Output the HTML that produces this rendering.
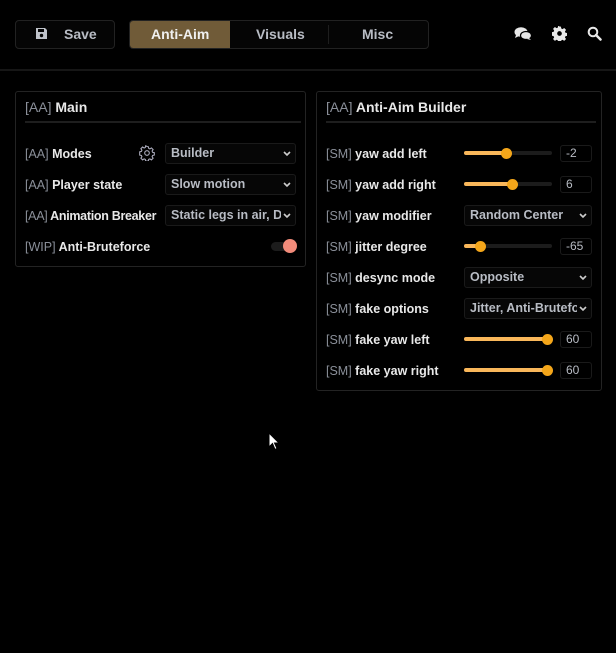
<!DOCTYPE html>
<html><head><style>
*{box-sizing:border-box;margin:0;padding:0}
body{width:616px;height:653px;background:#000;font-family:"Liberation Sans",sans-serif;font-size:12.5px;color:#e8e8e8;position:relative;overflow:hidden;font-weight:bold}
.a{position:absolute}
.btn{border:1px solid #222;border-radius:4px;background:#050505}
.lbl{position:absolute;white-space:nowrap;line-height:16px}
.g{color:#8a8f99;font-weight:normal}
.sel{position:absolute;height:21px;border:1px solid #1a1a1a;border-radius:3px;background:#060606;color:#b8bcc4;font-weight:bold;padding-left:5px;line-height:19px}
.sel span{display:block;overflow:hidden;white-space:nowrap;margin-right:14px}
.sel svg{position:absolute;right:4px;top:7px}
.tr{position:absolute;height:4px;background:#1c1c1c;border-radius:2px}
.fill{position:absolute;left:0;top:0;height:4px;background:#f9b75a;border-radius:2px}
.th{position:absolute;width:11px;height:11px;border-radius:50%;background:#f4a61a;top:-3.5px}
.num{position:absolute;width:32px;height:17px;border:1px solid #1a1a1a;border-radius:3px;color:#b8bcc4;font-size:12px;font-weight:normal;padding-left:5px;line-height:15px}
.panel{position:absolute;border:1px solid #232323;border-radius:3px}
</style></head><body>
<div class="a btn" style="left:15px;top:20px;width:100px;height:29px"></div>
<svg class="a" style="left:35px;top:27px" width="13" height="13" viewBox="0 0 13 13"><path d="M1 1h9l2 2v9H1z" fill="#bfc3ca"/><rect x="3" y="2" width="6" height="3" fill="#050505"/><circle cx="6.5" cy="8.5" r="1.7" fill="#050505"/></svg>
<div class="lbl" style="left:64px;top:26px;color:#b8bcc4;font-size:14px">Save</div>
<div class="a btn" style="left:129px;top:20px;width:300px;height:29px"></div>
<div class="a" style="left:130px;top:21px;width:100px;height:27px;background:#705b38;border-radius:3px 0 0 3px"></div>
<div class="a" style="left:328px;top:25px;width:1px;height:19px;background:#1e1e1e"></div>
<div class="lbl" style="left:151px;top:26px;font-size:14px;color:#f0f0f0">Anti-Aim</div>
<div class="lbl" style="left:256px;top:26px;font-size:14px;color:#b8bcc4">Visuals</div>
<div class="lbl" style="left:362px;top:26px;font-size:14px;color:#b8bcc4">Misc</div>
<svg class="a" style="left:514px;top:26px" width="18" height="15" viewBox="0 0 18 15"><ellipse cx="7" cy="6" rx="6.5" ry="4.8" fill="#e8e8e8"/><path d="M2 9l-1 3 4-2z" fill="#e8e8e8"/><ellipse cx="12" cy="9.5" rx="5.5" ry="4" fill="#e8e8e8" stroke="#000" stroke-width="1.2"/><path d="M15 12l2 2-4-1z" fill="#e8e8e8"/></svg>
<svg class="a" style="left:552px;top:26px" width="15" height="15" viewBox="0 0 16 16"><path d="M8 0.5l1.5.2.4 2 1.4.6 1.7-1.2 2 2-1.2 1.7.6 1.4 2 .4v2.8l-2 .4-.6 1.4 1.2 1.7-2 2-1.7-1.2-1.4.6-.4 2H6.6l-.4-2-1.4-.6-1.7 1.2-2-2 1.2-1.7-.6-1.4-2-.4V6.6l2-.4.6-1.4-1.2-1.7 2-2 1.7 1.2 1.4-.6.4-2z" fill="#e8e8e8"/><circle cx="8" cy="8" r="2.5" fill="#000"/></svg>
<svg class="a" style="left:587px;top:26px" width="15" height="15" viewBox="0 0 15 15"><circle cx="6" cy="6" r="4.3" fill="none" stroke="#e8e8e8" stroke-width="2"/><path d="M9 9l4.5 4.5" stroke="#e8e8e8" stroke-width="2.5" stroke-linecap="round"/></svg>
<div class="a" style="left:0;top:69px;width:616px;height:2px;background:#161616"></div>

<div class="panel" style="left:15px;top:91px;width:291px;height:176px"></div>
<div class="lbl" style="left:25px;top:99px;font-size:14px"><span class="g">[AA]</span> Main</div>
<div class="a" style="left:25px;top:121px;width:276px;height:2px;background:#1e1e1e"></div>
<div class="lbl" style="left:25px;top:146px"><span class="g">[AA]</span> Modes</div>
<svg class="a" style="left:139px;top:145px" width="16" height="16" viewBox="0 0 16 16"><path d="M8 1.5l1.3.2.4 1.7 1.2.5 1.5-1 1.7 1.7-1 1.5.5 1.2 1.7.4v2.4l-1.7.4-.5 1.2 1 1.5-1.7 1.7-1.5-1-1.2.5-.4 1.7H6.7l-.4-1.7-1.2-.5-1.5 1-1.7-1.7 1-1.5-.5-1.2-1.7-.4V6.8l1.7-.4.5-1.2-1-1.5 1.7-1.7 1.5 1 1.2-.5.4-1.7z" fill="none" stroke="#aab" stroke-width="1.1"/><circle cx="8" cy="8" r="2.3" fill="none" stroke="#aab" stroke-width="1.1"/></svg>
<div class="sel" style="left:165px;top:143px;width:131px"><span>Builder</span><svg width="8" height="6" viewBox="0 0 8 6"><path d="M1 1l3 3 3-3" fill="none" stroke="#ccc" stroke-width="1.6"/></svg></div>
<div class="lbl" style="left:25px;top:177px"><span class="g">[AA]</span> Player state</div>
<div class="sel" style="left:165px;top:174px;width:131px"><span>Slow motion</span><svg width="8" height="6" viewBox="0 0 8 6"><path d="M1 1l3 3 3-3" fill="none" stroke="#ccc" stroke-width="1.6"/></svg></div>
<div class="lbl" style="left:25px;top:208px;letter-spacing:-0.3px"><span class="g">[AA]</span> Animation Breaker</div>
<div class="sel" style="left:165px;top:205px;width:131px"><span>Static legs in air, Dis</span><svg width="8" height="6" viewBox="0 0 8 6"><path d="M1 1l3 3 3-3" fill="none" stroke="#ccc" stroke-width="1.6"/></svg></div>
<div class="lbl" style="left:25px;top:239px"><span class="g">[WIP]</span> Anti-Bruteforce</div>
<div class="a" style="left:271px;top:242px;width:22px;height:9px;border-radius:5px;background:#1c1c1c"></div>
<div class="a" style="left:283px;top:239px;width:14px;height:14px;border-radius:50%;background:#f28b7a"></div>

<div class="panel" style="left:316px;top:91px;width:286px;height:300px"></div>
<div class="lbl" style="left:326px;top:99px;font-size:14px"><span class="g">[AA]</span> Anti-Aim Builder</div>
<div class="a" style="left:326px;top:121px;width:270px;height:2px;background:#1e1e1e"></div>

<div class="lbl" style="left:326px;top:146px"><span class="g">[SM]</span> yaw add left</div>
<div class="tr" style="left:464px;top:151px;width:88px"><div class="fill" style="width:42px"></div><div class="th" style="left:37px"></div></div>
<div class="num" style="left:560px;top:145px">-2</div>
<div class="lbl" style="left:326px;top:177px"><span class="g">[SM]</span> yaw add right</div>
<div class="tr" style="left:464px;top:182px;width:88px"><div class="fill" style="width:48px"></div><div class="th" style="left:43px"></div></div>
<div class="num" style="left:560px;top:176px">6</div>
<div class="lbl" style="left:326px;top:208px"><span class="g">[SM]</span> yaw modifier</div>
<div class="sel" style="left:464px;top:205px;width:128px"><span>Random Center</span><svg width="8" height="6" viewBox="0 0 8 6"><path d="M1 1l3 3 3-3" fill="none" stroke="#ccc" stroke-width="1.6"/></svg></div>
<div class="lbl" style="left:326px;top:239px"><span class="g">[SM]</span> jitter degree</div>
<div class="tr" style="left:464px;top:244px;width:88px"><div class="fill" style="width:16px"></div><div class="th" style="left:11px"></div></div>
<div class="num" style="left:560px;top:238px">-65</div>
<div class="lbl" style="left:326px;top:270px"><span class="g">[SM]</span> desync mode</div>
<div class="sel" style="left:464px;top:267px;width:128px"><span>Opposite</span><svg width="8" height="6" viewBox="0 0 8 6"><path d="M1 1l3 3 3-3" fill="none" stroke="#ccc" stroke-width="1.6"/></svg></div>
<div class="lbl" style="left:326px;top:301px"><span class="g">[SM]</span> fake options</div>
<div class="sel" style="left:464px;top:298px;width:128px"><span>Jitter, Anti-Brutefo</span><svg width="8" height="6" viewBox="0 0 8 6"><path d="M1 1l3 3 3-3" fill="none" stroke="#ccc" stroke-width="1.6"/></svg></div>
<div class="lbl" style="left:326px;top:332px"><span class="g">[SM]</span> fake yaw left</div>
<div class="tr" style="left:464px;top:337px;width:88px"><div class="fill" style="width:83px"></div><div class="th" style="left:78px"></div></div>
<div class="num" style="left:560px;top:331px">60</div>
<div class="lbl" style="left:326px;top:363px"><span class="g">[SM]</span> fake yaw right</div>
<div class="tr" style="left:464px;top:368px;width:88px"><div class="fill" style="width:83px"></div><div class="th" style="left:78px"></div></div>
<div class="num" style="left:560px;top:362px">60</div>

<svg class="a" style="left:268px;top:432px" width="12" height="19" viewBox="0 0 12 19"><path d="M1 1v14l3.5-3.5 2.5 6 2-1-2.5-5.5H11z" fill="#fff" stroke="#000" stroke-width="1"/></svg>
</body></html>
